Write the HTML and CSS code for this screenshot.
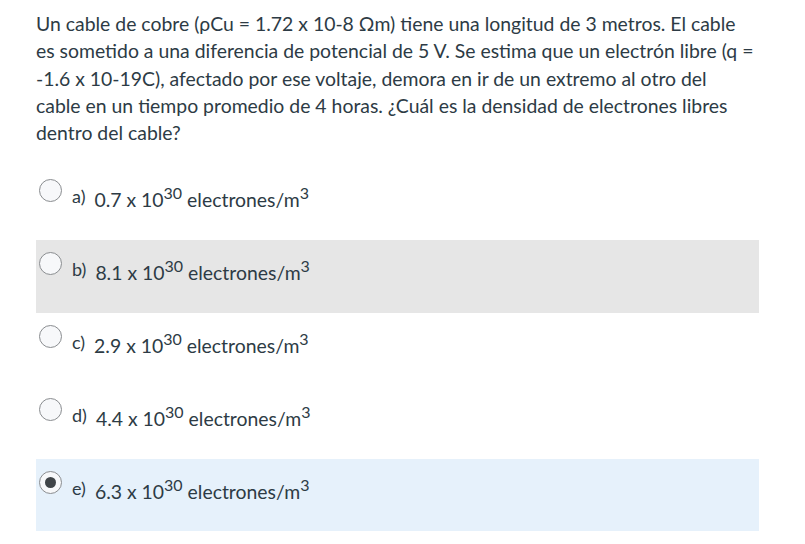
FILE: index.html
```html
<!DOCTYPE html>
<html lang="es">
<head>
<meta charset="utf-8">
<link rel="stylesheet" href="styles.css">
</head>
<body>
<div class="question">
  <p class="text">Un cable de cobre (ρCu = 1.72 x 10-8 Ωm) tiene una longitud de 3 metros. El cable es sometido a una diferencia de potencial de 5 V. Se estima que un electrón libre (q&nbsp;= -1.6 x 10-19C), afectado por ese voltaje, demora en ir de un extremo al otro del cable en un tiempo promedio de 4 horas. ¿Cuál es la densidad de electrones libres dentro del cable?</p>
  <div class="answers">
    <div class="answer">
      <span class="radio"></span>
      <span class="label">a)</span>
      <span class="value">0.7 x 10<sup>30</sup> electrones/m<sup>3</sup></span>
    </div>
    <div class="answer hover">
      <span class="radio"></span>
      <span class="label">b)</span>
      <span class="value">8.1 x 10<sup>30</sup> electrones/m<sup>3</sup></span>
    </div>
    <div class="answer">
      <span class="radio"></span>
      <span class="label">c)</span>
      <span class="value">2.9 x 10<sup>30</sup> electrones/m<sup>3</sup></span>
    </div>
    <div class="answer">
      <span class="radio"></span>
      <span class="label">d)</span>
      <span class="value">4.4 x 10<sup>30</sup> electrones/m<sup>3</sup></span>
    </div>
    <div class="answer selected">
      <span class="radio checked"></span>
      <span class="label">e)</span>
      <span class="value">6.3 x 10<sup>30</sup> electrones/m<sup>3</sup></span>
    </div>
  </div>
</div>
</body>
</html>
```
FILE: styles.css
```css
html, body {
  margin: 0;
  padding: 0;
  background: #ffffff;
}
body {
  font-family: Lato, "Noto Sans", sans-serif;
  color: #2d3b45;
}
.question {
  padding: 10px 0 0 36px;
}
.text {
  margin: 0;
  width: 718px;
  font-size: 19.4px;
  line-height: 27.3px;
}
.answers {
  margin-top: 21px;
  width: 723px;
}
.answer {
  height: 72.8px;
  display: flex;
  align-items: flex-start;
  box-sizing: border-box;
  padding-top: 12px;
  padding-left: 3px;
}
.answer.hover {
  background: #e6e6e6;
}
.answer.selected {
  background: #e6f1fb;
}
.radio {
  width: 21px;
  height: 21px;
  border: 1px solid #8a8d90;
  border-radius: 50%;
  background: #f7f8fa;
  flex: none;
  position: relative;
}
.radio.checked::after {
  content: "";
  position: absolute;
  left: 5px;
  top: 5px;
  width: 11px;
  height: 11px;
  border-radius: 50%;
  background: #3f4448;
}
.label {
  font-size: 18px;
  line-height: 20px;
  margin-left: 10px;
  margin-top: 7px;
}
.value {
  font-size: 19.4px;
  line-height: 24px;
  margin-left: 9px;
  margin-top: 9px;
}
.value sup {
  font-size: 16px;
  line-height: 0;
  vertical-align: 0;
  position: relative;
  top: -8px;
}
```
